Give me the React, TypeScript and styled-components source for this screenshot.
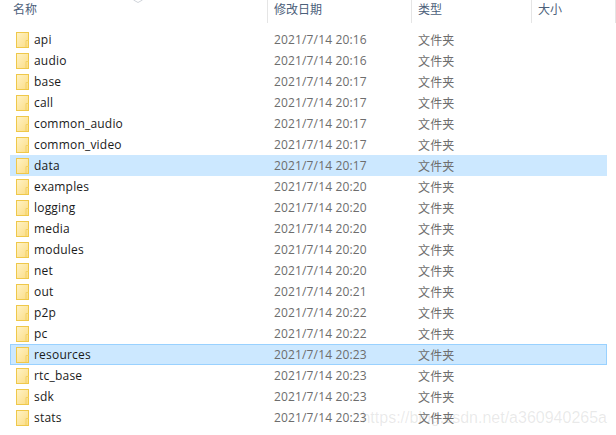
import React from "react";
import styled, { createGlobalStyle } from "styled-components";

const folders = [
  { name: "api", time: "20:16" },
  { name: "audio", time: "20:16" },
  { name: "base", time: "20:17" },
  { name: "call", time: "20:17" },
  { name: "common_audio", time: "20:17" },
  { name: "common_video", time: "20:17" },
  { name: "data", time: "20:17", state: "hover" },
  { name: "examples", time: "20:20" },
  { name: "logging", time: "20:20" },
  { name: "media", time: "20:20" },
  { name: "modules", time: "20:20" },
  { name: "net", time: "20:20" },
  { name: "out", time: "20:21" },
  { name: "p2p", time: "20:22" },
  { name: "pc", time: "20:22" },
  { name: "resources", time: "20:23", state: "selected" },
  { name: "rtc_base", time: "20:23" },
  { name: "sdk", time: "20:23" },
  { name: "stats", time: "20:23" },
];

function FolderIcon() {
  return (
    <FolderSvg width="14" height="16" viewBox="0 0 14 16">
      <defs>
        <linearGradient id="folderFill" x1="0" y1="0" x2="1" y2="1">
          <stop offset="0" stopColor="#fff3c6" />
          <stop offset="1" stopColor="#fbdc84" />
        </linearGradient>
      </defs>
      <rect x="0.5" y="0.5" width="12" height="15" fill="url(#folderFill)" stroke="#efc84a" />
      <path d="M10 15V8.5h2.5" fill="none" stroke="#f3d264" />
    </FolderSvg>
  );
}

export default function App() {
  return (
    <Page>
      <GlobalStyle />
      <SortArrow width="10" height="3" viewBox="0 0 10 3">
        <path d="M0.5 0L5 2.5L9.5 0" fill="none" stroke="#d0d4da" />
      </SortArrow>
      <Header>
        <HeaderCell>名称</HeaderCell>
        <HeaderCell>修改日期</HeaderCell>
        <HeaderCell>类型</HeaderCell>
        <HeaderCell>大小</HeaderCell>
      </Header>
      <List>
        {folders.map((f) => (
          <Row key={f.name} $state={f.state}>
            <NameCell>
              <FolderIcon />
              <Name>{f.name}</Name>
            </NameCell>
            <Meta>2021/7/14 {f.time}</Meta>
            <Meta>文件夹</Meta>
          </Row>
        ))}
      </List>
      <Watermark>https://blog.csdn.net/a360940265a</Watermark>
    </Page>
  );
}

const GlobalStyle = createGlobalStyle`
  html, body {
    margin: 0;
    padding: 0;
    background: #fff;
  }
`;

const Page = styled.div`
  position: relative;
  width: 616px;
  height: 435px;
  overflow: hidden;
  background: #fff;
  font-family: "Open Sans", "Noto Sans CJK SC", sans-serif;
  font-size: 12px;
`;

const SortArrow = styled.svg`
  position: absolute;
  left: 133px;
  top: 0;
`;

const Header = styled.div`
  display: grid;
  grid-template-columns: 268px 144px 120px 84px;
  height: 23px;
`;

const HeaderCell = styled.div`
  display: flex;
  align-items: center;
  height: 18px;
  padding: 0 0 5px 6px;
  border-right: 1px solid #e5e5e5;
  color: #4c607a;
  font-size: 12px;

  &:first-child {
    padding-left: 13px;
  }
`;

const List = styled.div`
  display: flex;
  flex-direction: column;
  margin: 6px 9px 0 10px;
`;

const Row = styled.div<{ $state?: string }>`
  display: grid;
  grid-template-columns: 257px 144px 1fr;
  align-items: center;
  flex: none;
  box-sizing: border-box;
  height: 21px;
  background: ${({ $state }) => ($state ? "#cce8ff" : "transparent")};
  border: 1px solid ${({ $state }) => ($state === "selected" ? "#99d1ff" : "transparent")};
`;

const NameCell = styled.div`
  display: flex;
  align-items: center;
  padding-left: 5px;
`;

const FolderSvg = styled.svg`
  flex: none;
`;

const Name = styled.span`
  margin-left: 4px;
  color: #1a1a1a;
  letter-spacing: 0.2px;
`;

const Meta = styled.span`
  padding-left: 6px;
  color: #6d6d6d;
  letter-spacing: 0.15px;
`;

const Watermark = styled.div`
  position: absolute;
  right: 9px;
  bottom: 8px;
  color: rgba(120, 120, 120, 0.16);
  font-family: "Liberation Sans", sans-serif;
  font-size: 16px;
`;
